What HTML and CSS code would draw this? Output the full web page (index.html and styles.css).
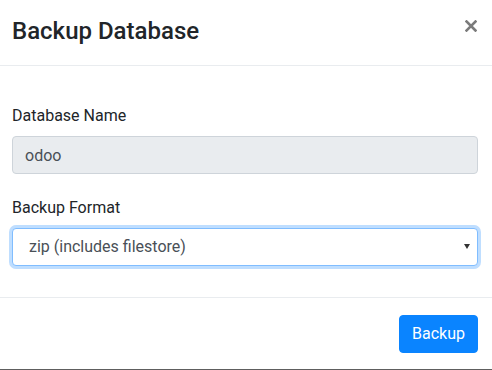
FILE: index.html
```html
<!DOCTYPE html>
<html lang="en">
<head>
  <meta charset="UTF-8" />
  <title>Backup Database</title>
  <link rel="stylesheet" href="styles.css">
</head>
<body>
  <div class="modal_content">
    <div class="modal_header">
      <h4 class="modal_title">Backup Database</h4>
      <button class="close_btn" aria-label="Close">
        <svg width="12" height="12" viewBox="0 0 12 12">
          <path d="M1.5 1.5 L10.5 10.5 M10.5 1.5 L1.5 10.5" stroke="#7b7b7b" stroke-width="2.6" stroke-linecap="square" />
        </svg>
      </button>
    </div>

    <div class="modal_body">
      <div class="form_group">
        <label class="form_label">Database Name</label>
        <input class="form_control" type="text" value="odoo" readonly />
      </div>
      <div class="form_group last">
        <label class="form_label">Backup Format</label>
        <div class="select_wrap">
          <select class="form_control select_focus">
            <option>zip (includes filestore)</option>
            <option>pg_dump custom format (without filestore)</option>
          </select>
          <span class="select_arrow"></span>
        </div>
      </div>
    </div>

    <div class="modal_footer">
      <button class="btn_primary">Backup</button>
    </div>
  </div>
</body>
</html>
```

FILE: styles.css
```css
html, body {
  margin: 0;
  padding: 0;
}

body {
  font-family: Roboto, "Liberation Sans", sans-serif;
  font-size: 16px;
  line-height: 1.5;
  color: #212529;
  background-color: #fff;
  width: 492px;
  height: 370px;
  overflow: hidden;
}

.modal_content {
  background-color: #fff;
  border-bottom: 1px solid #5e5e5e;
}

.modal_header {
  display: flex;
  justify-content: space-between;
  align-items: flex-start;
  height: 48px;
  padding: 17px 14px 0 12px;
  border-bottom: 1px solid #e9ecef;
}

.modal_title {
  margin: 0;
  font-size: 24px;
  font-weight: 500;
  line-height: 1.2;
  color: #212529;
}

.close_btn {
  background: none;
  border: none;
  padding: 0;
  margin: 3px 1px 0 0;
  cursor: pointer;
  line-height: 0;
}

.modal_body {
  padding: 38px 14px 31px 12px;
}

.form_group {
  margin-bottom: 22px;
}

.form_group.last {
  margin-bottom: 0;
}

.form_label {
  display: block;
  margin-bottom: 8px;
}

.form_control {
  display: block;
  box-sizing: border-box;
  width: 100%;
  height: 38px;
  padding: 6px 12px;
  font-family: inherit;
  font-size: 16px;
  line-height: 1.5;
  color: #495057;
  background-color: #fff;
  border: 1px solid #ced4da;
  border-radius: 4px;
  outline: none;
}

.form_control[readonly] {
  background-color: #e9ecef;
}

.select_wrap {
  position: relative;
}

select.form_control {
  -webkit-appearance: none;
  appearance: none;
  padding-left: 16px;
}

.select_focus {
  border-color: #80bdff;
  box-shadow: 0 0 0 3px rgba(0, 123, 255, 0.25);
}

.select_arrow {
  position: absolute;
  right: 8px;
  top: 16px;
  width: 0;
  height: 0;
  border-left: 3px solid transparent;
  border-right: 3px solid transparent;
  border-top: 5px solid #333;
}

.modal_footer {
  display: flex;
  justify-content: flex-end;
  padding: 17px 14px 16px 12px;
  border-top: 1px solid #e9ecef;
}

.btn_primary {
  height: 38px;
  padding: 6px 12px;
  font-family: inherit;
  font-size: 16px;
  line-height: 1.5;
  color: #fff;
  background-color: #0a84ff;
  border: 1px solid #0a84ff;
  border-radius: 4px;
  cursor: pointer;
}
```
